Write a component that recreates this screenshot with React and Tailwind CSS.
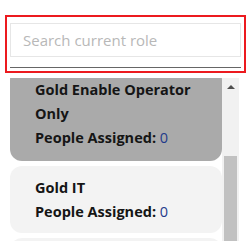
export default function App() {
  const font = { fontFamily: '"Open Sans", "Lato", sans-serif' };
  return (
    <div className="w-[247px] h-[241px] bg-white overflow-hidden" style={font}>
      <div className="pt-[15px] pl-[5px] pr-[1px]">
        <div className="border-2 border-[#ec1a1f] h-[58px] px-[3px] pt-[6px]">
          <div className="h-[34px] border border-[#e6e6e6] flex items-center pl-[12px] text-[15px] text-[#b8b8b8]">
            Search current role
          </div>
          <div className="mt-[10px] h-px bg-[#666666]"></div>
        </div>
      </div>
      <div className="mt-[5px] ml-[10px] w-[229px] h-[163px] flex overflow-hidden">
        <div className="w-[212px] flex flex-col gap-[5px] -mt-[10px]">
          <div className="bg-[#aaaaaa] rounded-[12px] pl-[25px] pr-[25px] pt-[10px] pb-[11px] text-[14.5px] font-bold leading-[24px] text-[#151515]">
            <div>Gold Enable Operator Only</div>
            <div>People Assigned: <span className="font-normal text-[#1f3a8a]">0</span></div>
          </div>
          <div className="bg-[#f3f3f3] rounded-[12px] pl-[25px] pr-[25px] pt-[10px] pb-[9px] text-[14.5px] font-bold leading-[24px] text-[#151515]">
            <div>Gold IT</div>
            <div>People Assigned: <span className="font-normal text-[#1f3a8a]">0</span></div>
          </div>
          <div className="bg-[#f3f3f3] rounded-[12px] h-[67px] shrink-0"></div>
        </div>
        <div className="w-[17px] bg-[#f1f1f1] flex flex-col items-center">
          <div className="h-[17px] w-full flex items-center justify-center">
            <div className="w-0 h-0 border-l-[4px] border-r-[4px] border-b-[4px] border-l-transparent border-r-transparent border-b-[#505050]"></div>
          </div>
          <div className="mt-[61px] w-[13px] flex-1 bg-[#c1c1c1]"></div>
        </div>
      </div>
    </div>
  );
}
